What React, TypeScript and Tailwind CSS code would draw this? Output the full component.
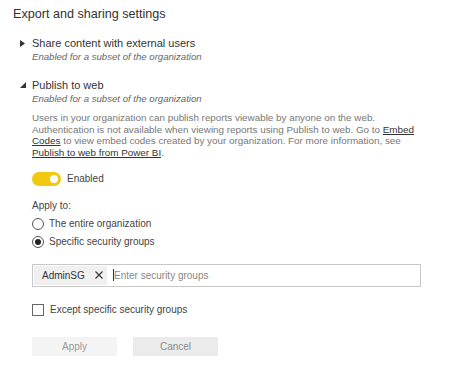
import React from "react";

const font = { fontFamily: '"Liberation Sans", Arial, sans-serif' };

const Caret: React.FC<{ open?: boolean }> = ({ open }) =>
  open ? (
    <svg width="6" height="6" viewBox="0 0 6 6" className="text-[#333]">
      <path d="M6 0 L6 6 L0 6 Z" fill="currentColor" />
    </svg>
  ) : (
    <svg width="5" height="7" viewBox="0 0 5 7" className="text-[#333]">
      <path d="M0 0 L5 3.5 L0 7 Z" fill="currentColor" />
    </svg>
  );

const Section: React.FC<{ title: string; open?: boolean; className?: string }> = ({
  title,
  open,
  className,
}) => (
  <div className={className}>
    <div className="flex items-center h-[14px]">
      <div className="w-[19px] pl-[7px] flex items-center">
        <Caret open={open} />
      </div>
      <span className="text-[11px] leading-[14px] text-[#333]">{title}</span>
    </div>
    <div className="pl-[19px] text-[9.6px] leading-[14px] italic text-[#666]">
      Enabled for a subset of the organization
    </div>
  </div>
);

const Radio: React.FC<{ label: string; checked?: boolean; className?: string }> = ({
  label,
  checked,
  className,
}) => (
  <div className={"flex items-center h-[14px] gap-[5px] " + (className ?? "")}>
    <span className="w-[12px] h-[12px] rounded-full border border-[#555] flex items-center justify-center">
      {checked && <span className="w-[6px] h-[6px] rounded-full bg-[#222]" />}
    </span>
    <span className="text-[10px] leading-[14px] text-[#444]">{label}</span>
  </div>
);

export default function App() {
  return (
    <div className="w-[474px] h-[369px] bg-white pl-[13px] pt-[6px]" style={font}>
      <h1 className="text-[12.6px] leading-[16px] text-[#333] font-normal">
        Export and sharing settings
      </h1>

      <Section className="mt-[14px]" title="Share content with external users" />
      <Section className="mt-[14px]" title="Publish to web" open />

      <div className="pl-[19px]">
        <p className="mt-[6px] text-[9.85px] leading-[11.7px] text-[#777]">
          Users in your organization can publish reports viewable by anyone on the web.
          <br />
          Authentication is not available when viewing reports using Publish to web. Go to{" "}
          <a className="text-[#333] underline">Embed</a>
          <br />
          <a className="text-[#333] underline">Codes</a> to view embed codes created by your
          organization. For more information, see
          <br />
          <a className="text-[#333] underline">Publish to web from Power BI</a>.
        </p>

        <div className="mt-[13px] flex items-center gap-[6px] h-[14px]">
          <span className="w-[29px] h-[14px] rounded-full bg-[#f2c811] flex items-center justify-end pr-[3px]">
            <span className="w-[8px] h-[8px] rounded-full bg-white" />
          </span>
          <span className="text-[10px] leading-[14px] text-[#444]">Enabled</span>
        </div>

        <div className="mt-[13px] text-[10px] leading-[14px] text-[#444]">Apply to:</div>
        <Radio className="mt-[4px]" label="The entire organization" />
        <Radio className="mt-[4px]" label="Specific security groups" checked />

        <div className="mt-[15px] w-[389px] h-[23px] border border-[#c8c8c8] flex items-center pl-[1px]">
          <span className="h-[19px] w-[73px] bg-[#f0f0f0] flex items-center pl-[8px] gap-[10px] text-[10px] text-[#333]">
            AdminSG
            <svg width="8" height="8" viewBox="0 0 8 8">
              <path d="M0.5 0.5 L7.5 7.5 M7.5 0.5 L0.5 7.5" stroke="#333" strokeWidth="1.1" />
            </svg>
          </span>
          <span className="ml-[6px] w-px h-[12px] bg-[#333]" />
          <span className="text-[10px] text-[#888]">Enter security groups</span>
        </div>

        <div className="mt-[16px] flex items-center h-[14px] gap-[6px]">
          <span className="w-[12px] h-[12px] border border-[#666]" />
          <span className="text-[10px] leading-[14px] text-[#444]">
            Except specific security groups
          </span>
        </div>

        <div className="mt-[20px] flex gap-[16px]">
          <button className="w-[85px] h-[19px] bg-[#f4f4f4] text-[10px] text-[#999]">
            Apply
          </button>
          <button className="w-[85px] h-[19px] bg-[#ebebeb] text-[10px] text-[#8a8a8a]">
            Cancel
          </button>
        </div>
      </div>
    </div>
  );
}
